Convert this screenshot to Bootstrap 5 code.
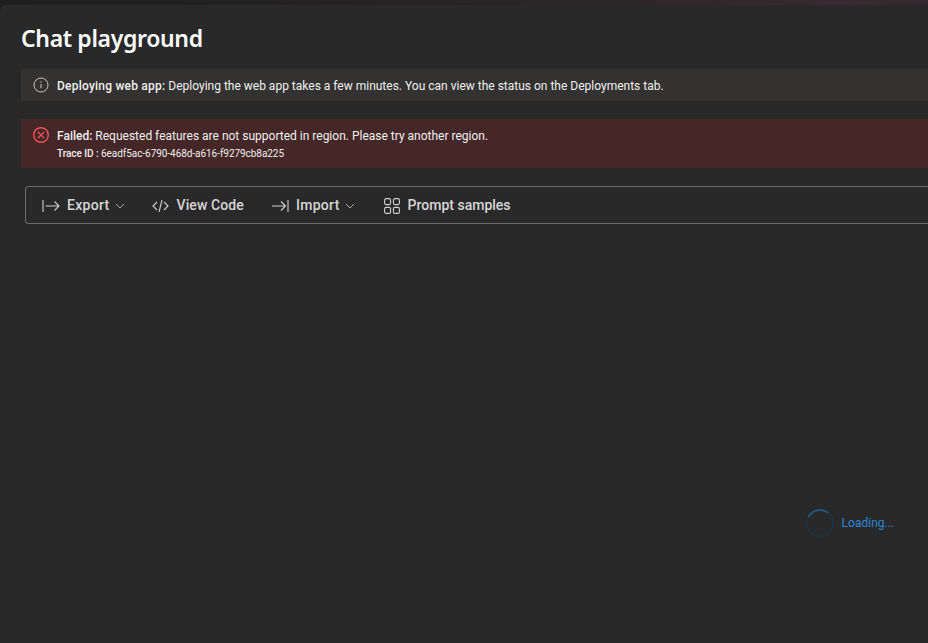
<!DOCTYPE html>
<html lang="en">
<head>
<meta charset="utf-8">
<title>Chat playground</title>
<link href="https://cdn.jsdelivr.net/npm/bootstrap@5.3.0/dist/css/bootstrap.min.css" rel="stylesheet">
<style>
html, body { height: 100%; }
body { background: #222; font-family: Roboto, "Noto Sans", sans-serif; color: #fff; overflow: hidden; }
.shell { height: 643px; padding-top: 5px; overflow: hidden; background: linear-gradient(90deg, #1f1f1f 0%, #242222 35%, #2c2628 65%, #382a30 90%, #352a2f 100%); }
.pane { height: 638px; background: #292929; border-top-left-radius: 6px; padding: 17px 0 0 21px; margin-right: -40px; }
.page-title { line-height: 32px; margin: 0 0 15px; font-family: "Noto Sans", sans-serif; font-weight: 600; font-size: 23px; letter-spacing: -.35px; }
.bar { display: flex; font-size: 12px; }
.bar-info { height: 32px; background: #333230; align-items: center; padding-left: 12px; margin-bottom: 18px; color: #f0f0f0; }
.bar-info span { padding-top: 2px; }
.bar-info b { letter-spacing: .22px; }
.bar-fail { height: 49px; background: #442726; padding: 8px 0 0 12px; margin-bottom: 18px; color: #f0f0f0; }
.bar svg { flex: none; margin-right: 8px; }
.bar b { font-weight: 500; }
.trace { font-size: 10px; line-height: 12px; margin-top: 3px; letter-spacing: -.05px; }
.tools { height: 38px; margin-left: 4px; border: 1px solid #6b6b6b; border-right: 0; border-radius: 4px 0 0 4px; padding-left: 16px; gap: 28px; }
.tool { display: flex; align-items: center; font-size: 14px; font-weight: 500; color: #d6d6d6; gap: 7px; padding-top: 1px; }
.tool svg { flex: none; }
.tool .caret-ico { margin-left: -2px; margin-right: -1px; }
.tool-wide { letter-spacing: .3px; }
.tool-code { gap: 8px; letter-spacing: .1px; margin-right: -1px; }
.tool-last { margin-left: 2px; gap: 8px; }
.stage { height: 313px; padding-right: 55px; }
.spin { width: 28px; height: 28px; }
.load-text { font-size: 12px; color: #2b88d8; }
.fill-w { width: 928px; }
</style>
</head>
<body>
<div class="shell">
  <main class="pane">
    <h1 class="page-title">Chat playground</h1>
    <div class="bar bar-info">
      <svg width="16" height="16" viewBox="0 0 16 16" fill="none" stroke="#c4c4c4"><circle cx="8" cy="8" r="7"/><path d="M8 7v4.200" stroke-width="1.100"/><circle cx="8" cy="5" r=".7" fill="#c4c4c4" stroke="none"/></svg>
      <span><b>Deploying web app:</b> Deploying the web app takes a few minutes. You can view the status on the Deployments tab.</span>
    </div>
    <div class="bar bar-fail">
      <svg width="16" height="16" viewBox="0 0 16 16" fill="none" stroke="#f1535b" stroke-width="1.400"><circle cx="8" cy="8" r="7.300"/><path d="M5 5l6 6M11 5l-6 6"/></svg>
      <div>
        <div><b>Failed:</b> Requested features are not supported in region. Please try another region.</div>
        <div class="trace"><b>Trace ID :</b> 6eadf5ac-6790-468d-a616-f9279cb8a225</div>
      </div>
    </div>
    <div class="tools d-flex align-items-center">
      <div class="tool tool-wide">
        <svg width="18" height="14" viewBox="0 0 18 14" fill="none" stroke="#cfcfcf" stroke-width="1.100"><path d="M1 1v12M3.500 7H17M12.500 2.500L17 7l-4.500 4.500"/></svg>
        <span>Export</span>
        <svg class="caret-ico" width="10" height="6" viewBox="0 0 10 6" fill="none" stroke="#a8a8a8"><path d="M1 1l4 4 4-4"/></svg>
      </div>
      <div class="tool tool-code">
        <svg width="17" height="14" viewBox="0 0 17 14" fill="none" stroke="#cfcfcf" stroke-width="1.100"><path d="M5 3L1 7l4 4M12 3l4 4-4 4M10 1L7 13"/></svg>
        <span>View Code</span>
      </div>
      <div class="tool tool-wide">
        <svg width="18" height="14" viewBox="0 0 18 14" fill="none" stroke="#cfcfcf" stroke-width="1.100"><path d="M17 1v12M1 7h13.500M10 2.500L14.500 7 10 11.500"/></svg>
        <span>Import</span>
        <svg class="caret-ico" width="10" height="6" viewBox="0 0 10 6" fill="none" stroke="#a8a8a8"><path d="M1 1l4 4 4-4"/></svg>
      </div>
      <div class="tool tool-last">
        <svg width="16" height="16" viewBox="0 0 16 16" fill="none" stroke="#cfcfcf" stroke-width="1.100"><rect x=".6" y=".6" width="6" height="6" rx="1.500"/><rect x="9.400" y=".6" width="6" height="6" rx="1.500"/><rect x=".6" y="9.400" width="6" height="6" rx="1.500"/><rect x="9.400" y="9.400" width="6" height="6" rx="1.500"/></svg>
        <span>Prompt samples</span>
      </div>
    </div>
    <div class="stage fill-w d-flex justify-content-end align-items-end">
      <div class="d-flex align-items-center">
        <svg class="spin me-2" viewBox="0 0 28 28" fill="none" stroke-width="1.600"><circle cx="14" cy="14" r="13" stroke="#1b3448"/><path d="M2.500 8A13 13 0 0 1 22 3.700" stroke="#235f91"/></svg>
        <span class="load-text">Loading...</span>
      </div>
    </div>
  </main>
</div>
<script src="https://cdn.jsdelivr.net/npm/bootstrap@5.3.0/dist/js/bootstrap.bundle.min.js"></script>
</body>
</html>
